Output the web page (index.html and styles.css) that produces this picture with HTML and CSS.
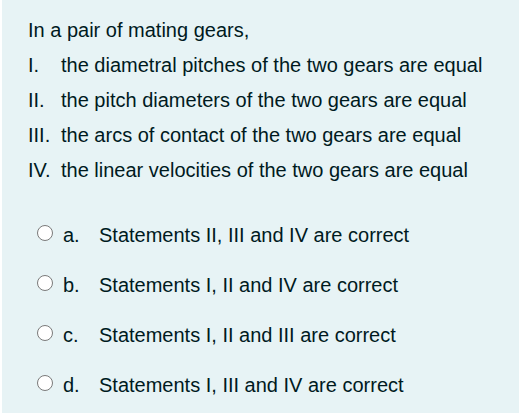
FILE: index.html
```html
<!DOCTYPE html>
<html>
<head>
<meta charset="utf-8">
<link rel="stylesheet" href="styles.css">
</head>
<body>
<div class="question">
  <div class="stem">
    <p class="intro">In a pair of mating gears,</p>
    <div class="statements">
      <span class="num">I.</span><span>the diametral pitches of the two gears are equal</span>
      <span class="num">II.</span><span>the pitch diameters of the two gears are equal</span>
      <span class="num">III.</span><span>the arcs of contact of the two gears are equal</span>
      <span class="num">IV.</span><span>the linear velocities of the two gears are equal</span>
    </div>
  </div>
  <div class="answers">
    <label class="option"><span class="radio"></span><span class="letter">a.</span><span class="text">Statements II, III and IV are correct</span></label>
    <label class="option"><span class="radio"></span><span class="letter">b.</span><span class="text">Statements I, II and IV are correct</span></label>
    <label class="option"><span class="radio"></span><span class="letter">c.</span><span class="text">Statements I, II and III are correct</span></label>
    <label class="option"><span class="radio"></span><span class="letter">d.</span><span class="text">Statements I, III and IV are correct</span></label>
  </div>
</div>
</body>
</html>
```
FILE: styles.css
```css
html, body {
  margin: 0;
  padding: 0;
  background: #ffffff;
}
body {
  font-family: "Liberation Sans", Arial, sans-serif;
  font-size: 20px;
  color: #001a1e;
}
.question {
  margin: 0 1px 2px 2px;
  height: 413px;
  box-sizing: border-box;
  background: #e7f3f5;
  padding: 13px 10px 0 26px;
  line-height: 35px;
}
.intro {
  margin: 0;
}
.statements {
  display: grid;
  grid-template-columns: 33px 1fr;
}
.answers {
  margin-top: 22px;
  display: flex;
  flex-direction: column;
}
.option {
  display: flex;
  align-items: flex-start;
  padding: 7.5px 0;
}
.radio {
  width: 16px;
  height: 16px;
  box-sizing: border-box;
  border: 1.3px solid #7a7a7a;
  border-radius: 50%;
  background: #ffffff;
  margin: 7px 10.5px 0 8.5px;
  flex: none;
}
.letter {
  width: 36px;
  flex: none;
}
```
